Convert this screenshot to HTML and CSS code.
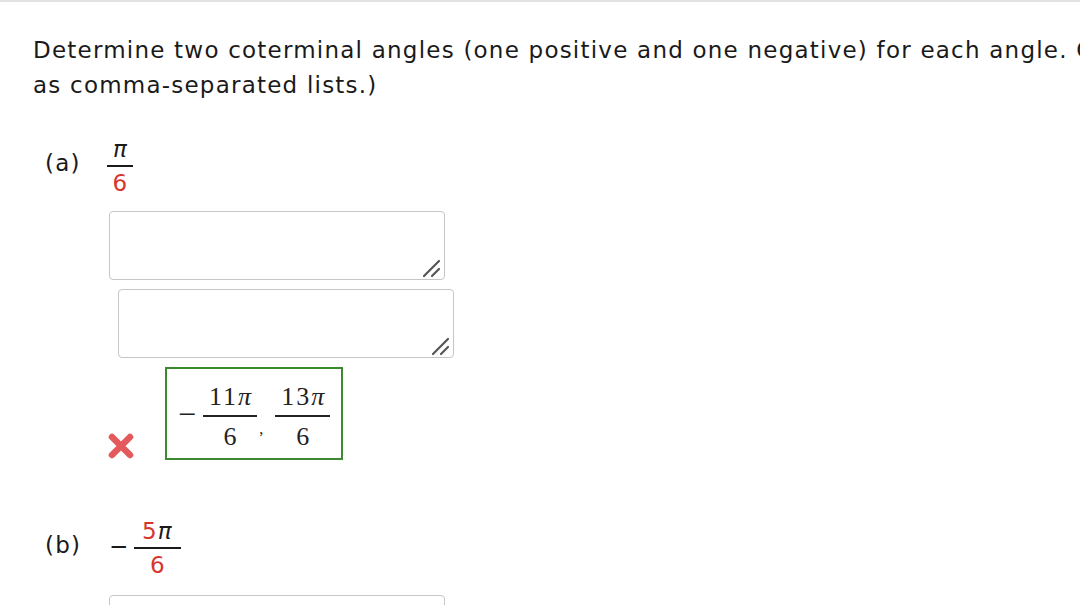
FILE: index.html
```html
<!DOCTYPE html>
<html>
<head>
<meta charset="utf-8">
<link rel="stylesheet" href="styles.css">
</head>
<body>
<div class="topbar"></div>
<main class="question">
  <p class="prompt">Determine two coterminal angles (one positive and one negative) for each angle. Give your answers in radians. (Enter your answers as comma-separated lists.)</p>

  <section class="part part-a">
    <div class="part-head">
      <span class="label">(a)</span>
      <span class="frac sans">
        <span class="num"><span class="pi">π</span></span>
        <span class="den red">6</span>
      </span>
    </div>
    <div class="field first"><textarea class="answer"></textarea><span class="grip"><svg width="20" height="20" viewBox="0 0 20 20"><path d="M2 18 L17 3 M10 18 L17 11" stroke="#555" stroke-width="2.2" stroke-linecap="round"/></svg></span></div>
    <div class="field second"><textarea class="answer"></textarea><span class="grip"><svg width="20" height="20" viewBox="0 0 20 20"><path d="M2 18 L17 3 M10 18 L17 11" stroke="#555" stroke-width="2.2" stroke-linecap="round"/></svg></span></div>
    <div class="feedback">
      <span class="cross" aria-label="incorrect">
        <svg width="28" height="28" viewBox="0 0 28 28"><path d="M5 5 L23 23 M23 5 L5 23" stroke="#e2484a" stroke-width="6.5" stroke-linecap="round" opacity="0.9"/></svg>
      </span>
      <div class="solution">
        <span class="minus">−</span>
        <span class="frac serif">
          <span class="num">11<i>π</i></span>
          <span class="den">6</span>
        </span>
        <span class="comma">,</span>
        <span class="frac serif">
          <span class="num">13<i>π</i></span>
          <span class="den">6</span>
        </span>
      </div>
    </div>
  </section>

  <section class="part part-b">
    <div class="part-head">
      <span class="label">(b)</span>
      <span class="neg">−</span>
      <span class="frac sans">
        <span class="num"><span class="red">5</span><span class="pi">π</span></span>
        <span class="den red">6</span>
      </span>
    </div>
    <div class="field first"><textarea class="answer"></textarea><span class="grip"><svg width="20" height="20" viewBox="0 0 20 20"><path d="M2 18 L17 3 M10 18 L17 11" stroke="#555" stroke-width="2.2" stroke-linecap="round"/></svg></span></div>
  </section>
</main>
</body>
</html>
```

FILE: styles.css
```css
html, body {
  margin: 0;
  padding: 0;
  overflow: hidden;
  background: #fff;
}
body {
  font-family: "DejaVu Sans", Verdana, sans-serif;
  color: #1a1a1a;
  font-size: 23px;
  letter-spacing: 1.22px;
}
.topbar {
  height: 2px;
  background: #e2e2e2;
}
.question {
  padding-left: 33px;
}
.prompt {
  margin: 31px 0 0 0;
  width: 1700px;
  line-height: 35px;
}
.part-head {
  display: flex;
  align-items: center;
  padding-left: 12px;
}
.part-a .part-head {
  margin-top: 31px;
}
.label {
  width: 62px;
  margin-bottom: 8px;
}
.frac {
  display: inline-flex;
  flex-direction: column;
  align-items: center;
  letter-spacing: 0;
}
.frac .num {
  padding: 0 6px;
  border-bottom: 2px solid #1a1a1a;
  line-height: 31px;
}
.frac .den {
  line-height: 32px;
}
.pi {
  font-style: italic;
}
.part-b .frac .num {
  padding: 0 8px;
  letter-spacing: 1px;
}
.red {
  color: #d8342c;
}
.field {
  position: relative;
  width: 336px;
  height: 69px;
}
.field.first {
  margin-left: 76px;
  margin-top: 12px;
}
.field.second {
  margin-left: 85px;
  margin-top: 9px;
}
.answer {
  display: block;
  box-sizing: border-box;
  width: 100%;
  height: 100%;
  border: 1px solid #c6c6c6;
  border-radius: 4px;
  margin: 0;
  padding: 4px;
  font: inherit;
  outline: none;
  resize: none;
}
.grip {
  position: absolute;
  right: 3px;
  bottom: 3px;
  width: 20px;
  height: 20px;
  pointer-events: none;
}
.feedback {
  display: flex;
  align-items: flex-end;
  margin-top: 9px;
  margin-left: 74px;
}
.cross {
  width: 58px;
  height: 28px;
  display: flex;
}
.solution {
  display: flex;
  align-items: flex-start;
  border: 2px solid #3b8a2f;
  padding: 10px 11px 1px 11px;
  font-family: "Liberation Serif", "DejaVu Serif", serif;
  font-size: 26px;
  letter-spacing: 0;
  color: #222;
}
.solution .minus {
  margin-top: 17px;
  margin-right: 7px;
  font-size: 32px;
  line-height: 36px;
}
.solution .frac .num {
  padding: 0 4px 0 6px;
  letter-spacing: 2px;
  line-height: 36px;
  border-bottom: 2px solid #222;
}
.solution .frac .den {
  line-height: 40px;
}
.solution .comma {
  margin: 40px 12px 0 2px;
  font-size: 16px;
  line-height: 20px;
}
.part-b .part-head {
  margin-top: 56px;
}
.neg {
  width: 25px;
  margin-left: 2px;
  margin-bottom: 6px;
}
.part-b .field.first {
  margin-top: 14px;
}
```
